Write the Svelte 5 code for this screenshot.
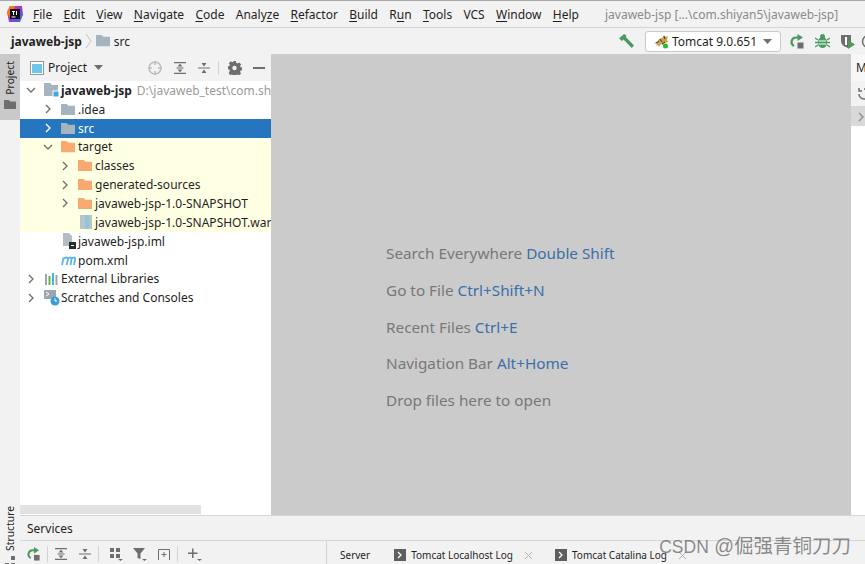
<script>
  const menus = [
    ['', 'F', 'ile'], ['', 'E', 'dit'], ['', 'V', 'iew'], ['', 'N', 'avigate'], ['', 'C', 'ode'],
    ['Analy', 'z', 'e'], ['', 'R', 'efactor'], ['', 'B', 'uild'], ['R', 'u', 'n'], ['', 'T', 'ools'],
    ['VCS', '', ''], ['', 'W', 'indow'], ['', 'H', 'elp']
  ];

  const tree = [
    { depth: 0, arrow: 'down', icon: 'module', name: 'javaweb-jsp', hint: 'D:\\javaweb_test\\com.shiyan5\\javaweb-jsp', bold: true },
    { depth: 1, arrow: 'right', icon: 'folder', name: '.idea' },
    { depth: 1, arrow: 'right', icon: 'folder', name: 'src', selected: true },
    { depth: 1, arrow: 'down', icon: 'orange', name: 'target', excluded: true },
    { depth: 2, arrow: 'right', icon: 'orange', name: 'classes', excluded: true },
    { depth: 2, arrow: 'right', icon: 'orange', name: 'generated-sources', excluded: true },
    { depth: 2, arrow: 'right', icon: 'orange', name: 'javaweb-jsp-1.0-SNAPSHOT', excluded: true },
    { depth: 2, icon: 'war', name: 'javaweb-jsp-1.0-SNAPSHOT.war', excluded: true },
    { depth: 1, icon: 'iml', name: 'javaweb-jsp.iml' },
    { depth: 1, icon: 'pom', name: 'pom.xml' },
    { depth: 0, arrow: 'right', icon: 'libs', name: 'External Libraries' },
    { depth: 0, arrow: 'right', icon: 'scratch', name: 'Scratches and Consoles' }
  ];

  const hints = [
    ['Search Everywhere', 'Double Shift'],
    ['Go to File', 'Ctrl+Shift+N'],
    ['Recent Files', 'Ctrl+E'],
    ['Navigation Bar', 'Alt+Home'],
    ['Drop files here to open', '']
  ];
</script>

{#snippet folder(color, w = 14)}
  <svg width={w} height={w * 0.8} viewBox="0 0 15 12"><path d="M0 0h6l2 2h7v10H0z" fill={color} /></svg>
{/snippet}

{#snippet chevron(dir, color = '#6e6e6e')}
  <svg width="10" height="10" viewBox="0 0 10 10" fill="none" stroke={color} stroke-width="1.3">
    {#if dir === 'down'}<path d="M1 3l4 4 4-4" />{:else}<path d="M3 1l4 4-4 4" />{/if}
  </svg>
{/snippet}

{#snippet expandAll()}
  <svg width="14" height="14" viewBox="0 0 14 14" fill="#6e6e6e"><path d="M1 1h12v1.2H1zM1 11.800h12V13H1zM3.500 6.400h7v1.200h-7zM7 2.800l2.500 2.600h-5zM7 11.200L4.500 8.600h5z" /></svg>
{/snippet}

{#snippet collapseAll()}
  <svg width="14" height="14" viewBox="0 0 14 14" fill="#6e6e6e"><path d="M1 6.400h12v1.200H1zM7 5.500L4.500 2h5zM7 8.500l2.500 3.500h-5z" /></svg>
{/snippet}

{#snippet rerun(size = 15)}
  <svg width={size} height={size} viewBox="0 0 15 15" fill="none">
    <path d="M8 3.500H6A4.500 4.500 0 0 0 4 12" stroke="#4a9a5f" stroke-width="2.200" />
    <path d="M7.500 0l5.500 3.500L7.500 7z" fill="#4a9a5f" />
    <rect x="7.500" y="8.500" width="6" height="6" fill="#6e6e6e" />
  </svg>
{/snippet}

{#snippet treeIcon(name)}
  {#if name === 'folder'}
    {@render folder('#a6b4bf')}
  {:else if name === 'orange'}
    {@render folder('#f9a86f')}
  {:else if name === 'module'}
    <svg width="16" height="16" viewBox="0 0 16 16"><path d="M0 1h6l2 2h6v11H0z" fill="#a6b4bf" /><rect x="9" y="9" width="6" height="6" fill="#3fa9dd" stroke="#fff" /></svg>
  {:else if name === 'war'}
    <svg class="war" width="12" height="14" viewBox="0 0 12 14"><rect width="12" height="14" fill="#b8c4c9" /><rect x="5" width="4" height="14" fill="#8fc7d8" /></svg>
  {:else if name === 'iml'}
    <svg width="16" height="16" viewBox="0 0 16 16"><path d="M2 0h6l3 3v10H2z" fill="#b4bdc4" /><rect x="8" y="9" width="7" height="7" fill="#2b2b2b" /><rect x="10" y="12" width="3" height="1" fill="#fff" /></svg>
  {:else if name === 'pom'}
    <svg width="15" height="12" viewBox="0 0 15 12"><path d="M1 11l1.500-7.500M5.500 11L7 5.500Q7.500 3.500 9 3.500T10.500 5.500L9.500 11M2.500 5Q4 3.500 5.500 3.500T7 5.500M10.500 5Q11.500 3.500 13 3.500T14 5.500L13 11" fill="none" stroke="#5cb8e0" stroke-width="1.800" /></svg>
  {:else if name === 'libs'}
    <svg width="15" height="14" viewBox="0 0 15 14"><path d="M1 2h2v11H1z" fill="#9aa7b0" /><path d="M4.500 4h2v9h-2z" fill="#62b543" /><path d="M8 1h2v12H8z" fill="#40b6e0" /><path d="M11.500 3h2v10h-2z" fill="#9aa7b0" /></svg>
  {:else if name === 'scratch'}
    <svg width="16" height="16" viewBox="0 0 16 16"><path d="M0 0h12v9H0z" fill="#9aa7b0" /><path d="M2 2l3 2-3 2" fill="none" stroke="#fff" /><circle cx="11" cy="11" r="4.500" fill="#389fd6" /><path d="M11 8.500V11h2" fill="none" stroke="#fff" /></svg>
  {/if}
{/snippet}

{#snippet console()}
  <svg width="12" height="12" viewBox="0 0 12 12"><rect width="12" height="12" fill="#5f5f5f" /><path d="M4 3l3 3-3 3" fill="none" stroke="#fff" stroke-width="1.300" /></svg>
{/snippet}

{#snippet close()}
  <svg width="9" height="9" viewBox="0 0 9 9" stroke="#b4b4b4"><path d="M1 1l7 7M8 1L1 8" /></svg>
{/snippet}

<div class="ide">
  <header class="menubar">
    <svg class="logo" width="16" height="16" viewBox="0 0 16 16">
      <defs>
        <linearGradient id="jb" x1="0" y1="0" x2="1" y2="1">
          <stop offset="0" stop-color="#f9357d" />
          <stop offset="0.5" stop-color="#9a3ad0" />
          <stop offset="1" stop-color="#2f6fe8" />
        </linearGradient>
      </defs>
      <path d="M3 0h12l1 9-3 7H2L0 6z" fill="url(#jb)" />
      <path d="M0 6l3-6h5L3 12z" fill="#f97a12" />
      <rect x="3" y="3" width="10" height="10" fill="#111" />
      <rect x="4.500" y="10.500" width="4" height="1" fill="#fff" />
      <path d="M5 5h3v1H7v3H6V6H5z M9 5h1v4H9z" fill="#fff" />
    </svg>
    <nav class="menus">
      {#each menus as [pre, key, post]}
        <span>{pre}<u>{key}</u>{post}</span>
      {/each}
    </nav>
    <span class="title">javaweb-jsp [...\com.shiyan5\javaweb-jsp]</span>
  </header>

  <div class="navbar">
    <b>javaweb-jsp</b>
    <svg class="crumb" width="7" height="16" viewBox="0 0 7 16" fill="none" stroke="#c4c4c4"><path d="M1 1l5 7-5 7" /></svg>
    {@render folder('#a6b4bf')}
    <span class="crumb-name">src</span>
    <div class="run-tools">
      <svg width="15" height="14" viewBox="0 0 15 14"><path d="M0 4.500L5 0l2.500 1.500L6.800 3 15 11.500 12.800 14 4.500 5.500 3 7z" fill="#4a9a5f" /></svg>
      <div class="combo">
        <svg width="15" height="15" viewBox="0 0 15 15">
          <path d="M0 9l3-1 2-3 3-1 2-3 1 2 3-1-1 3 1 3-3 1-2 2-2-1-2 3-1-2-2 1 1-2z" fill="#c9a24a" />
          <path d="M2 9l3-2M6 5l2 3M10 2l1 3M8 10l3-2" stroke="#3a3a3a" />
          <circle cx="11.500" cy="12" r="2.500" fill="#22c02a" />
        </svg>
        <span>Tomcat 9.0.651</span>
        <svg class="caret" width="9" height="5" viewBox="0 0 9 5"><path d="M0 0h9L4.500 5z" fill="#6e6e6e" /></svg>
      </div>
      <div class="run-icons">
        {@render rerun()}
        <svg width="15" height="15" viewBox="0 0 15 15" fill="#4a9a5f"><ellipse cx="7.500" cy="8.500" rx="4.500" ry="5.500" /><circle cx="7.500" cy="2.500" r="2.500" /><path d="M0 4l3 2M15 4l-3 2M0 8.500h3M12 8.500h3M0 13l3-2M15 13l-3-2" stroke="#4a9a5f" stroke-width="1.400" /><path d="M4 7h7M4 10h7" stroke="#fff" /></svg>
        <svg width="15" height="15" viewBox="0 0 15 15"><path d="M1 1h10v6l-3 7Q1 12 1 7z" fill="#6e6e6e" /><path d="M6 3v8" stroke="#fff" stroke-width="2" /><path d="M8 6l7 4.500L8 15z" fill="#4a9a5f" /></svg>
        <svg class="clipped" width="15" height="15" viewBox="0 0 15 15" fill="none" stroke="#6e6e6e" stroke-width="1.500"><circle cx="7.500" cy="7.500" r="6" /></svg>
      </div>
    </div>
  </div>

  <div class="workspace">
    <aside class="stripe">
      <div class="stripe-tab active">
        <span class="vertical">Project</span>
        {@render folder('#6e6e6e', 12)}
      </div>
      <div class="stripe-tab bottom">
        <span class="vertical">Structure</span>
        <svg width="12" height="12" viewBox="0 0 12 12" fill="#6e6e6e"><path d="M7 0h4v4H7zM1 7h4v4H1zM7 7h4v4H7z" /></svg>
      </div>
    </aside>

    <div class="columns">
      <div class="main">
        <section class="project">
          <div class="panel-head">
            <svg width="14" height="14" viewBox="0 0 14 14"><rect x="0.500" y="0.500" width="13" height="13" fill="#fff" stroke="#8a9aa5" /><rect x="2" y="3" width="10" height="9" fill="#6fc6ea" /></svg>
            <span class="panel-title">Project</span>
            <svg class="caret" width="9" height="5" viewBox="0 0 9 5"><path d="M0 0h9L4.500 5z" fill="#6e6e6e" /></svg>
            <span class="grow"></span>
            <svg class="locate" width="14" height="14" viewBox="0 0 14 14" fill="none" stroke="#bdbdbd" stroke-width="1.500"><circle cx="7" cy="7" r="6" /><path d="M7 0v4M7 10v4M0 7h4M10 7h4" /></svg>
            <span class="expand">{@render expandAll()}</span>
            <span class="collapse">{@render collapseAll()}</span>
            <i class="sep"></i>
            <svg width="14" height="14" viewBox="0 0 14 14"><path d="M5.500 0h3l.4 2 1.400.6 1.700-1.100 2.100 2.100-1.100 1.700.6 1.400 2 .4-.1 2.800-1.900.4-.6 1.400 1.100 1.700-2.100 2.100-1.700-1.100-1.400.6-.4 1.900h-3l-.4-1.900-1.400-.6-1.700 1.100L.9 12.300 2 10.600l-.6-1.400-1.900-.4v-3l1.900-.4.600-1.400L.9 2.300 3 .2l1.700 1.100 1.400-.6z" transform="scale(0.93)" fill="#6e6e6e" /><circle cx="6.500" cy="7" r="2.200" fill="#f2f2f2" /></svg>
            <svg class="minimize" width="12" height="2" viewBox="0 0 12 2"><rect width="12" height="2" fill="#6e6e6e" /></svg>
          </div>

          <div class="tree">
            {#each tree as row}
              <div class="row" class:selected={row.selected} class:excluded={row.excluded} style="padding-left: {5 + row.depth * 17}px">
                <span class="arrow">
                  {#if row.arrow}{@render chevron(row.arrow, row.selected ? '#fff' : '#6e6e6e')}{/if}
                </span>
                <span class="file-icon">{@render treeIcon(row.icon)}</span>
                <span class="name" class:bold={row.bold}>{row.name}</span>
                {#if row.hint}<span class="hint">{row.hint}</span>{/if}
              </div>
            {/each}
          </div>

          <div class="hscroll"><div class="thumb"></div></div>
        </section>

        <section class="editor">
          {#each hints as [label, keys]}
            <p>{label} {#if keys}<span class="keys">{keys}</span>{/if}</p>
          {/each}
        </section>

        <aside class="maven">
          <div class="maven-title">M</div>
          <div class="maven-tool">
            <svg width="13" height="13" viewBox="0 0 13 13" fill="none" stroke="#6e6e6e" stroke-width="1.500"><path d="M7 2a5 5 0 1 1-5 5" /><path d="M2 1v3h3" /></svg>
          </div>
          <div class="maven-row">{@render chevron('right', '#8a8a8a')}</div>
        </aside>
      </div>

      <section class="services">
        <div class="services-title">Services</div>
        <div class="services-bar">
          <div class="service-tools">
            <span class="tool run">{@render rerun(14)}</span>
            <i class="bar-sep"></i>
            <span class="tool first">{@render expandAll()}</span>
            <span class="tool">{@render collapseAll()}</span>
            <i class="bar-sep wide"></i>
            <span class="tool first">
              <svg width="14" height="14" viewBox="0 0 14 14" fill="#6e6e6e"><path d="M1 1h4v4H1zM7 1h4v4H7zM1 7h4v4H1zM7 7h4v4H7zM9 12h5l-2.500 2z" /></svg>
            </span>
            <span class="tool">
              <svg width="14" height="14" viewBox="0 0 14 14" fill="#6e6e6e"><path d="M0 1h12L7.500 6.500V12l-3-1V6.500zM9 12h5l-2.500 2z" /></svg>
            </span>
            <span class="tool">
              <svg width="14" height="14" viewBox="0 0 14 14" fill="none" stroke="#6e6e6e"><path d="M1.500 13V2.500h11V13M7 5v5M4.500 7.500h5" /></svg>
            </span>
            <i class="bar-sep wide"></i>
            <span class="tool first">
              <svg width="14" height="14" viewBox="0 0 14 14" fill="#6e6e6e"><path d="M4 1.500h1.500v4h4V7h-4v4H4V7H0V5.500h4zM9 12h5l-2.500 2z" /></svg>
            </span>
          </div>
          <div class="tabs">
            <span class="tab server">Server</span>
            <span class="tab">{@render console()}<span>Tomcat Localhost Log</span><em>{@render close()}</em></span>
            <span class="tab">{@render console()}<span>Tomcat Catalina Log</span><em>{@render close()}</em></span>
          </div>
        </div>
      </section>
    </div>
  </div>

  <div class="watermark"><span>CSDN</span> @倔强青铜刀刀</div>
</div>

<style>
  :global(body) {
    margin: 0;
    background: #f2f2f2;
  }

  .ide {
    position: relative;
    width: 865px;
    height: 564px;
    display: flex;
    flex-direction: column;
    overflow: hidden;
    background: #f2f2f2;
    color: #1f1f1f;
    font-family: "Noto Sans", "Open Sans", sans-serif;
    font-size: 12px;
  }

  svg {
    display: block;
    flex: none;
  }

  .menubar {
    height: 28px;
    flex: none;
    display: flex;
    align-items: center;
    padding-left: 7px;
    border-top: 1px solid #a8a8a8;
    border-bottom: 1px solid #d6d6d6;
    box-sizing: border-box;
  }

  .menus {
    display: flex;
    gap: 11.300px;
    margin-left: 10px;
    font-size: 12px;
  }

  .menus u {
    text-underline-offset: 2px;
  }

  .title {
    margin-left: 26px;
    color: #8a8a8a;
    white-space: nowrap;
  }

  .navbar {
    height: 26px;
    flex: none;
    display: flex;
    align-items: center;
    padding-left: 11px;
  }

  .navbar b {
    font-weight: 700;
  }

  .crumb {
    margin: 0 4px 0 3px;
  }

  .crumb-name {
    margin-left: 4px;
  }

  .run-tools {
    margin-left: auto;
    display: flex;
    align-items: center;
  }

  .combo {
    width: 136px;
    height: 21px;
    box-sizing: border-box;
    margin-left: 11px;
    padding: 0 8px;
    display: flex;
    align-items: center;
    gap: 3px;
    background: #fff;
    border: 1px solid #c9c9c9;
    border-radius: 3px;
  }

  .combo .caret {
    margin-left: auto;
  }

  .run-icons {
    display: flex;
    gap: 10px;
    margin-left: 9px;
    width: 75px;
    overflow: hidden;
  }

  .clipped {
    margin-left: -4px;
  }

  .workspace {
    flex: 1;
    display: flex;
    min-height: 0;
  }

  .stripe {
    width: 20px;
    flex: none;
    display: flex;
    flex-direction: column;
    justify-content: space-between;
  }

  .stripe-tab {
    display: flex;
    flex-direction: column;
    align-items: center;
    gap: 5px;
    font-size: 10.300px;
  }

  .stripe-tab.active {
    height: 66px;
    padding-top: 7px;
    box-sizing: border-box;
    background: #c9c9c9;
  }

  .stripe-tab.bottom {
    height: 59px;
    box-sizing: border-box;
    padding-top: 1px;
    overflow: hidden;
  }

  .vertical {
    writing-mode: vertical-rl;
    transform: rotate(180deg);
    line-height: 20px;
  }

  .columns {
    flex: 1;
    min-width: 0;
    display: flex;
    flex-direction: column;
  }

  .main {
    flex: 1;
    min-height: 0;
    display: flex;
  }

  .project {
    width: 251px;
    flex: none;
    display: flex;
    flex-direction: column;
    background: #fff;
    overflow: hidden;
  }

  .panel-head {
    height: 27px;
    flex: none;
    display: flex;
    align-items: center;
    padding: 0 6px 0 10px;
    background: #f2f2f2;
  }

  .panel-title {
    margin-left: 4px;
  }

  .panel-head .caret {
    margin-left: 7px;
  }

  .grow {
    flex: 1;
  }

  .expand {
    margin-left: 11px;
  }

  .collapse {
    margin-left: 10px;
  }

  .sep {
    width: 1px;
    height: 14px;
    margin: 0 9px 0 7px;
    background: #d4d4d4;
  }

  .minimize {
    margin-left: 11px;
  }

  .tree {
    flex: 1;
    min-height: 0;
  }

  .row {
    height: 18.850px;
    display: flex;
    align-items: center;
    white-space: nowrap;
    overflow: hidden;
  }

  .row.selected {
    background: #2675bf;
    color: #fff;
  }

  .row.excluded {
    background: #ffffe4;
  }

  .arrow {
    width: 12px;
    flex: none;
    display: flex;
    justify-content: center;
  }

  .file-icon {
    width: 16px;
    margin-left: 7px;
    flex: none;
    display: flex;
    align-items: center;
  }

  .war {
    margin-left: 2px;
  }

  .name {
    margin-left: 1px;
  }

  .name.bold {
    font-weight: 700;
  }

  .hint {
    margin-left: 5px;
    color: #9a9a9a;
  }

  .hscroll {
    height: 9px;
    margin-bottom: 1px;
    flex: none;
  }

  .thumb {
    width: 181px;
    height: 100%;
    background: #e2e2e2;
  }

  .editor {
    flex: 1;
    min-width: 0;
    box-sizing: border-box;
    padding: 189px 0 0 115px;
    background: #cbcbcb;
    color: #787878;
    font-size: 15.300px;
    display: flex;
    flex-direction: column;
    gap: 15.750px;
  }

  .editor p {
    margin: 0;
    line-height: 21px;
    white-space: nowrap;
  }

  .keys {
    color: #3b6fa8;
  }

  .maven {
    width: 14px;
    flex: none;
    background: #fff;
    overflow: hidden;
  }

  .maven-title {
    height: 27px;
    padding-left: 5px;
    line-height: 27px;
    background: #f7f7f7;
    white-space: nowrap;
  }

  .maven-tool {
    height: 26px;
    padding-left: 6px;
    display: flex;
    align-items: center;
    background: #f2f2f2;
    border-bottom: 1px solid #d6d6d6;
    box-sizing: border-box;
  }

  .maven-row {
    height: 19px;
    padding-left: 5px;
    display: flex;
    align-items: center;
    background: #d9d9d9;
  }

  .services {
    height: 49px;
    flex: none;
    display: flex;
    flex-direction: column;
    border-top: 1px solid #d6d6d6;
    box-sizing: border-box;
  }

  .services-title {
    height: 24px;
    flex: none;
    line-height: 25px;
    padding-left: 7px;
    border-bottom: 1px solid #d6d6d6;
  }

  .services-bar {
    flex: 1;
    display: flex;
    min-height: 0;
  }

  .service-tools {
    width: 307px;
    flex: none;
    display: flex;
    align-items: center;
    box-sizing: border-box;
    padding: 2px 0 0 7px;
    border-right: 1px solid #d6d6d6;
  }

  .tool {
    width: 14px;
    margin-left: 10px;
  }

  .tool.run,
  .tool.first {
    margin-left: 0;
  }

  .bar-sep {
    width: 1px;
    height: 16px;
    margin: 0 6px;
    background: #d4d4d4;
  }

  .bar-sep.wide {
    margin-right: 10px;
  }

  .tabs {
    display: flex;
    align-items: center;
    padding-top: 5px;
    font-size: 10px;
  }

  .tab {
    display: flex;
    align-items: center;
    gap: 5px;
  }

  .tab em {
    margin-left: 6px;
    margin-right: 22px;
  }

  .server {
    margin-left: 13px;
    margin-right: 24px;
  }

  .watermark {
    position: absolute;
    right: 14px;
    bottom: 5px;
    font-family: "Liberation Sans", "Noto Sans CJK SC", sans-serif;
    font-size: 19.500px;
    color: rgba(90, 90, 90, 0.7);
    white-space: nowrap;
  }

  .watermark span {
    font-size: 17.500px;
  }
</style>
